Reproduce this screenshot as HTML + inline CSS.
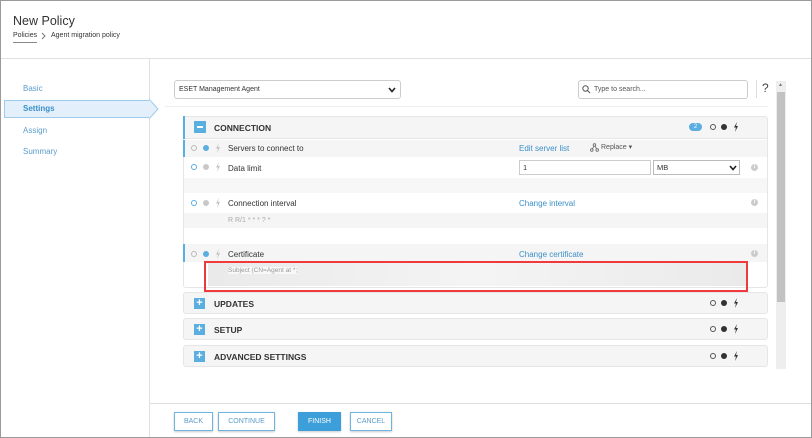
<!DOCTYPE html>
<html><head><meta charset="utf-8"><style>
*{box-sizing:border-box;margin:0;padding:0}
body{width:812px;height:438px;overflow:hidden;font-family:"Liberation Sans",sans-serif;background:#fff;position:relative;color:#333}
.frame{position:absolute;left:0;top:0;width:812px;height:438px;border:1px solid #9a9a9a}
.abs{position:absolute}
.t{font-size:8px;white-space:nowrap}
.lnk{color:#3a8fc9;font-size:8px;position:absolute;white-space:nowrap}
.row{position:absolute;left:184px;width:583px}
.dot{position:absolute;width:6px;height:6px;border-radius:50%}
.sec{position:absolute;left:183px;width:585px;height:22px;background:#f5f5f5;border:1px solid #e6e6e6;border-radius:3px}
.plus{position:absolute;left:10px;top:5px;width:11px;height:11px;background:#5aaee0;color:#fff;font-size:11px;line-height:10px;text-align:center;font-weight:bold}
.sh{position:absolute;left:30px;top:6px;font-size:8.5px;font-weight:bold;color:#333}
.ic{position:absolute;top:7px;width:6px;height:6px;border-radius:50%}
.btn{position:absolute;top:412px;height:19px;border:1px solid #6fb3e0;color:#5a9ccc;font-size:7px;text-align:center;line-height:17px;background:#fff;box-shadow:0 1px 2px #ccc}
.info{position:absolute;width:7px;height:7px;border-radius:50%;background:#ccc;color:#fff;font-size:5px;line-height:7px;text-align:center;font-weight:bold}
</style></head><body>
<svg width="0" height="0" style="position:absolute"><defs><symbol id="bolt" viewBox="0 0 6 10"><path d="M4 0 L1 5.5 L3 5.5 L2 10 L5 4 L3 4 Z"/></symbol><symbol id="chev" viewBox="0 0 8 6"><path d="M1 1 L4 4.5 L7 1" fill="none" stroke="#222" stroke-width="1.6"/></symbol></defs></svg>
<div class="abs t" style="left:13px;top:14px;font-size:12.5px;color:#333">New Policy</div>
<div class="abs t" style="left:13px;top:32px;font-size:7px;color:#333">Policies</div>
<div class="abs" style="left:13px;top:42px;width:24px;height:1px;background:#888"></div>
<svg class="abs" style="left:41px;top:32px" width="5" height="8"><path d="M1 1 L4 4 L1 7" fill="none" stroke="#777"/></svg>
<div class="abs t" style="left:51px;top:32px;font-size:7px;color:#333">Agent migration policy</div>
<div class="abs" style="left:1px;top:58px;width:810px;height:1px;background:#e0e0e0"></div>
<div class="abs" style="left:149px;top:59px;width:1px;height:378px;background:#e0e0e0"></div>
<div class="abs t" style="left:23px;top:84px;color:#5a9ccc">Basic</div>
<div class="abs" style="left:4px;top:100px;width:146px;height:18px;background:#e3f0fb;border:1px solid #9fcbeb;border-right:none"></div>
<svg class="abs" style="left:149px;top:99px" width="10" height="20"><path d="M0 0 L9 10 L0 20" fill="#e3f0fb" stroke="#9fcbeb"/></svg>
<div class="abs t" style="left:23px;top:104px;font-weight:bold;color:#3a8fc9">Settings</div>
<div class="abs t" style="left:23px;top:126px;color:#5a9ccc">Assign</div>
<div class="abs t" style="left:23px;top:147px;color:#5a9ccc">Summary</div>

<div class="abs" style="left:174px;top:80px;width:227px;height:19px;border:1px solid #ccc;border-radius:3px"></div>
<div class="abs t" style="left:179px;top:86px;font-size:7px">ESET Management Agent</div>
<svg class="abs" style="left:388px;top:87px" width="8" height="6"><use href="#chev"/></svg>
<div class="abs" style="left:578px;top:80px;width:170px;height:19px;border:1px solid #ccc;border-radius:3px"></div>
<svg class="abs" style="left:582px;top:85px" width="9" height="9"><circle cx="3.5" cy="3.5" r="2.7" fill="none" stroke="#555"/><path d="M5.5 5.5 L8 8" stroke="#555"/></svg>
<div class="abs t" style="left:594px;top:86px;font-size:7px;color:#555">Type to search...</div>
<div class="abs" style="left:756px;top:80px;width:1px;height:18px;background:#ddd"></div>
<div class="abs t" style="left:762px;top:81px;font-size:12px;color:#444">?</div>
<div class="abs" style="left:165px;top:106px;width:603px;height:1px;background:#eee"></div>
<div class="abs" style="left:776px;top:81px;width:10px;height:288px;background:#eee"></div>
<div class="abs" style="left:777px;top:92px;width:8px;height:210px;background:#c2c2c2"></div>
<div class="abs t" style="left:778px;top:82px;font-size:5px;color:#777">▲</div>

<div class="abs" style="left:183px;top:116px;width:585px;height:172px;border:1px solid #e6e6e6;border-radius:3px;background:#fff"></div>
<div class="abs" style="left:184px;top:117px;width:583px;height:22px;background:#f5f5f5;border-bottom:1px solid #e6e6e6"></div>
<div class="abs" style="left:183px;top:116px;width:2px;height:23px;background:#5aaee0"></div>
<div class="abs" style="left:194px;top:121px;width:12px;height:12px;background:#5aaee0"></div>
<div class="abs" style="left:197px;top:126px;width:6px;height:1.5px;background:#fff"></div>
<div class="abs t" style="left:214px;top:123px;font-weight:bold;font-size:8.5px">CONNECTION</div>
<div class="abs" style="left:689px;top:123px;width:13px;height:8px;border-radius:4px;background:#5aaee0;color:#fff;font-size:6px;text-align:center;line-height:8px">2</div>
<div class="dot" style="left:710px;top:124px;border:1px solid #555"></div>
<div class="dot" style="left:721px;top:124px;background:#333"></div>
<svg class="abs" style="left:733px;top:122px" width="6" height="10" fill="#333"><use href="#bolt"/></svg>

<div class="row" style="top:140px;height:17px;background:#f5f5f5"></div>
<div class="abs" style="left:183px;top:140px;width:2px;height:17px;background:#5aaee0"></div>
<div class="row" style="top:178px;height:15px;background:#f7f7f7"></div>
<div class="row" style="top:213px;height:15px;background:#f5f5f5"></div>
<div class="row" style="top:244px;height:18px;background:#f5f5f5"></div>
<div class="abs" style="left:183px;top:244px;width:2px;height:18px;background:#5aaee0"></div>

<div class="dot" style="left:191px;top:145px;border:1px solid #bbb"></div><div class="dot" style="left:203px;top:145px;background:#5aaee0"></div><svg class="abs" style="left:215px;top:143px" width="6" height="10" fill="#c4c4c4"><use href="#bolt"/></svg>
<div class="abs t" style="left:228px;top:144px">Servers to connect to</div>
<div class="lnk" style="left:519px;top:144px">Edit server list</div>
<svg class="abs" style="left:590px;top:143px" width="9" height="9"><g fill="none" stroke="#666" stroke-width=".8"><circle cx="4.5" cy="2" r="1.3"/><circle cx="1.8" cy="7" r="1.3"/><circle cx="7.2" cy="7" r="1.3"/><path d="M4 3.2 L2.3 5.8 M5 3.2 L6.7 5.8"/></g></svg>
<div class="abs t" style="left:601px;top:143px;font-size:7px;color:#555">Replace ▾</div>

<div class="dot" style="left:191px;top:164px;border:1px solid #5aaee0"></div><div class="dot" style="left:203px;top:164px;background:#c8c8c8"></div><svg class="abs" style="left:215px;top:162px" width="6" height="10" fill="#c4c4c4"><use href="#bolt"/></svg>
<div class="abs t" style="left:228px;top:164px">Data limit</div>
<div class="abs" style="left:519px;top:160px;width:132px;height:15px;border:1px solid #ccc"></div>
<div class="abs t" style="left:523px;top:163px;font-size:7.5px">1</div>
<div class="abs" style="left:653px;top:160px;width:87px;height:15px;border:1px solid #bbb"></div>
<div class="abs t" style="left:657px;top:163px;font-size:7.5px">MB</div>
<svg class="abs" style="left:729px;top:165px" width="8" height="6"><use href="#chev"/></svg>
<div class="info" style="left:751px;top:164px">i</div>

<div class="dot" style="left:191px;top:200px;border:1px solid #5aaee0"></div><div class="dot" style="left:203px;top:200px;background:#c8c8c8"></div><svg class="abs" style="left:215px;top:198px" width="6" height="10" fill="#c4c4c4"><use href="#bolt"/></svg>
<div class="abs t" style="left:228px;top:199px">Connection interval</div>
<div class="lnk" style="left:519px;top:199px">Change interval</div>
<div class="info" style="left:751px;top:199px">i</div>
<div class="abs t" style="left:228px;top:217px;font-size:7px;color:#aaa">R R/1 * * * ? *</div>

<div class="dot" style="left:191px;top:251px;border:1px solid #bbb"></div><div class="dot" style="left:203px;top:251px;background:#5aaee0"></div><svg class="abs" style="left:215px;top:249px" width="6" height="10" fill="#c4c4c4"><use href="#bolt"/></svg>
<div class="abs t" style="left:228px;top:250px">Certificate</div>
<div class="lnk" style="left:519px;top:250px">Change certificate</div>
<div class="info" style="left:751px;top:250px">i</div>
<div class="abs" style="left:208px;top:263px;width:540px;height:23px;background:linear-gradient(90deg,#eaeaea,#f4f4f4 50%,#eaeaea)"></div>
<div class="abs t" style="left:228px;top:267px;font-size:6.5px;color:#999;background:#f8f8f8">Subject (CN=Agent at *;</div>
<div class="abs" style="left:204px;top:261px;width:544px;height:31px;border:2px solid #f0393c"></div>

<div class="sec" style="top:292px"><div class="plus">+</div><div class="sh">UPDATES</div><div class="ic" style="left:526px;border:1px solid #555"></div><div class="ic" style="left:537px;background:#333"></div><svg class="abs" style="left:549px;top:5px" width="6" height="10" fill="#333"><use href="#bolt"/></svg></div>
<div class="sec" style="top:318px"><div class="plus">+</div><div class="sh">SETUP</div><div class="ic" style="left:526px;border:1px solid #555"></div><div class="ic" style="left:537px;background:#333"></div><svg class="abs" style="left:549px;top:5px" width="6" height="10" fill="#333"><use href="#bolt"/></svg></div>
<div class="sec" style="top:345px"><div class="plus">+</div><div class="sh">ADVANCED SETTINGS</div><div class="ic" style="left:526px;border:1px solid #555"></div><div class="ic" style="left:537px;background:#333"></div><svg class="abs" style="left:549px;top:5px" width="6" height="10" fill="#333"><use href="#bolt"/></svg></div>

<div class="abs" style="left:150px;top:403px;width:661px;height:1px;background:#ddd"></div>
<div class="btn" style="left:174px;width:39px">BACK</div>
<div class="btn" style="left:218px;width:57px">CONTINUE</div>
<div class="btn" style="left:298px;width:43px;background:#3d9fd9;color:#fff;border-color:#3d9fd9">FINISH</div>
<div class="btn" style="left:350px;width:42px">CANCEL</div>
<div class="frame"></div>
</body></html>
